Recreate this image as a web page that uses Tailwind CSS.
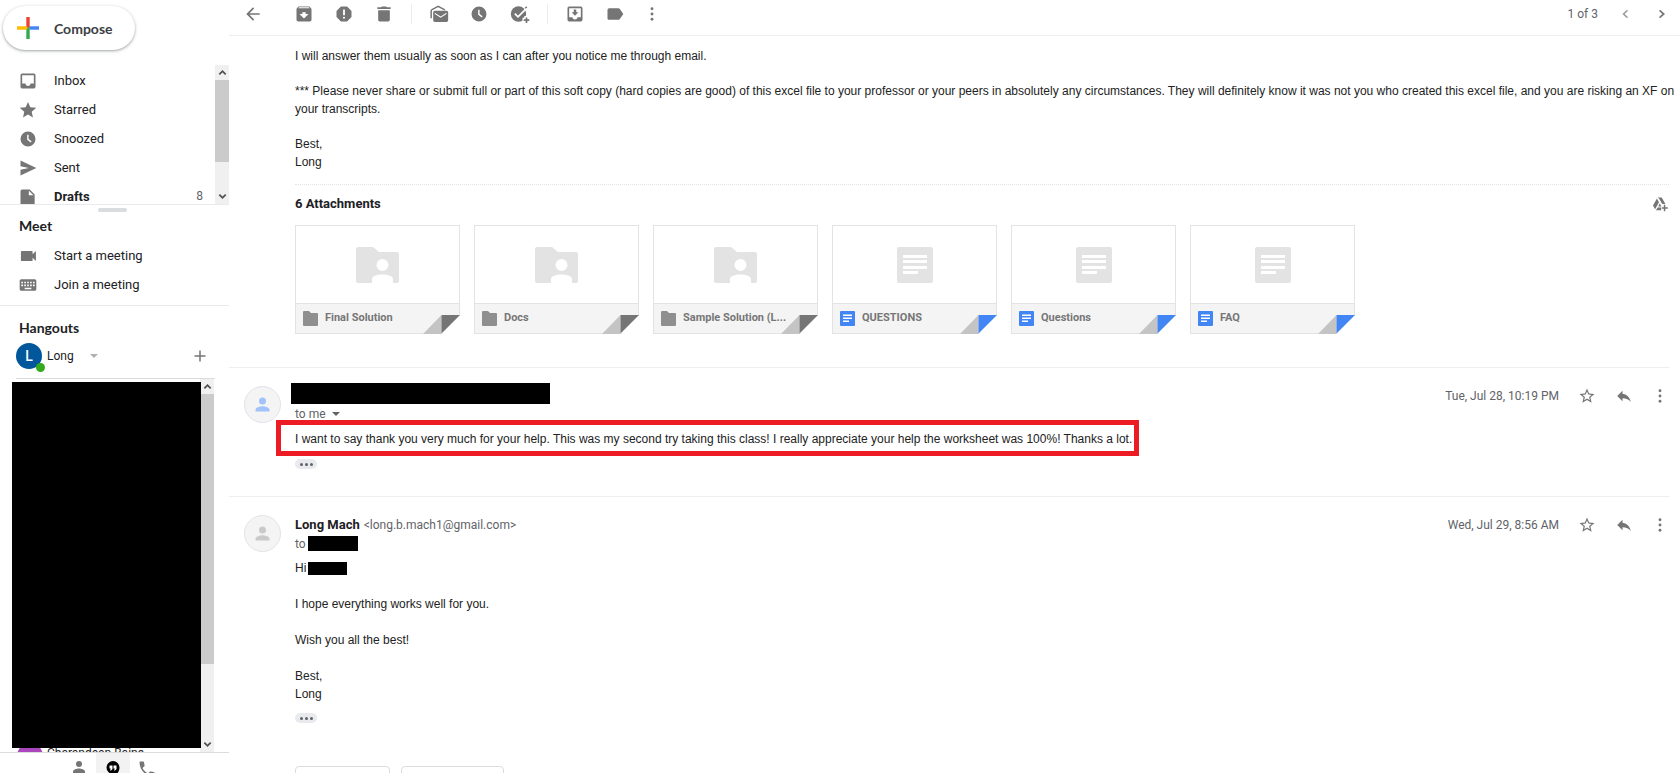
<!DOCTYPE html>
<html lang="en">
<head>
<meta charset="utf-8">
<title>Mail</title>
<script src="https://cdn.jsdelivr.net/npm/@tailwindcss/browser@4"></script>
</head>
<body class="bg-white font-['Roboto',sans-serif] text-[#202124]">
<svg class="hidden" aria-hidden="true">
  <symbol id="star-o" viewBox="0 0 24 24"><path d="M22 9.24l-7.19-.62L12 2 9.19 8.63 2 9.24l5.46 4.73L5.82 21 12 17.27 18.18 21l-1.63-7.03L22 9.24zM12 15.4l-3.76 2.27 1-4.28-3.32-2.88 4.38-.38L12 6.1l1.71 4.04 4.38.38-3.32 2.88 1 4.28L12 15.4z"/></symbol>
  <symbol id="reply" viewBox="0 0 24 24"><path d="M10 9V5l-7 7 7 7v-4.100c5 0 8.500 1.600 11 5.100-1-5-4-10-11-11z"/></symbol>
  <symbol id="dots" viewBox="0 0 24 24"><circle cx="12" cy="5" r="1.900"/><circle cx="12" cy="12" r="1.900"/><circle cx="12" cy="19" r="1.900"/></symbol>
  <symbol id="clock" viewBox="0 0 24 24"><path fill-rule="evenodd" d="M12 3a9 9 0 1 0 0 18 9 9 0 0 0 0-18zM11 7h1.700v5l3.600 2.700-1 1.400L11 13z"/></symbol>
  <symbol id="person" viewBox="0 0 24 24"><circle cx="12" cy="8" r="4"/><path d="M12 14c-2.670 0-8 1.340-8 4v2h16v-2c0-2.660-5.330-4-8-4z"/></symbol>
  <symbol id="folder-shared" viewBox="0 0 43 36"><path fill-rule="evenodd" d="M2 0h15l6 5h18a2 2 0 0 1 2 2v27a2 2 0 0 1-2 2h-4v-4c0-6-21-6-21 0v4H2a2 2 0 0 1-2-2V2a2 2 0 0 1 2-2zM26.500 12a6 6 0 1 0 0 12 6 6 0 0 0 0-12z"/></symbol>
  <symbol id="doc" viewBox="0 0 36 36"><path fill-rule="evenodd" d="M2 0h32a2 2 0 0 1 2 2v32a2 2 0 0 1-2 2H2a2 2 0 0 1-2-2V2a2 2 0 0 1 2-2zM6 8v3h24V8zM6 13v3h24v-3zM6 19v3h24v-3zM6 24v3h15v-3z"/></symbol>
  <symbol id="folder" viewBox="0 0 15 15"><path d="M1 0h5l2 2h6a1 1 0 0 1 1 1v11a1 1 0 0 1-1 1H1a1 1 0 0 1-1-1V1a1 1 0 0 1 1-1z"/></symbol>
  <symbol id="doc-sm" viewBox="0 0 15 15"><rect width="15" height="15" rx="1" fill="#4285f4"/><path fill="#fff" d="M3 3.500h9V5H3zM3 6.500h9V8H3zM3 9.500h6V11H3z"/></symbol>
  <symbol id="fold" viewBox="0 0 37 19"><path fill="#fff" d="M37 0v19H18.500z"/><path fill="#c4c4c4" d="M0 19L18.500 0v19z"/><path d="M18.500 0H37L18.500 18.500z"/></symbol>
  <symbol id="up" viewBox="0 0 10 10"><path fill="none" stroke="#505050" stroke-width="2" d="M1.500 7L5 3.500 8.500 7"/></symbol>
  <symbol id="down" viewBox="0 0 10 10"><path fill="none" stroke="#505050" stroke-width="2" d="M1.500 3L5 6.500 8.500 3"/></symbol>
</svg>

<div class="flex h-screen overflow-hidden">
  <aside class="flex w-[229px] shrink-0 flex-col">
    <div class="h-[65px] shrink-0 pt-1.5 pl-[3px]">
      <button class="flex h-11 w-[132px] items-center gap-3 rounded-full bg-white pl-[13px] font-['Lato',sans-serif] text-[14px] font-bold text-[#3c4043] shadow-[0_1px_2px_0_rgba(60,64,67,.302),0_1px_3px_1px_rgba(60,64,67,.149)]">
        <svg class="size-[24px]" viewBox="0 0 24 24"><path fill="#ea4335" d="M10.300 1h3.400v11h-3.400z"/><path fill="#fbbc04" d="M1 10.300h9.300L13.700 13.700H1z"/><path fill="#34a853" d="M10.300 13.700l3.400-3.400V23h-3.400z"/><path fill="#4285f4" d="M13.700 10.300H23v3.400h-9.300z"/></svg>
        <span class="pl-0.5">Compose</span>
      </button>
    </div>

    <div class="flex h-[139px] shrink-0 overflow-hidden">
      <nav class="flex-1 pt-px text-[13px] leading-[29px]">
        <a href="#" class="flex h-[29px] items-center pl-[18px]"><svg class="mr-4 size-5 fill-[#757575]" viewBox="0 0 24 24"><path d="M19 3H5a2 2 0 0 0-2 2v14c0 1.100.900 2 2 2h14a2 2 0 0 0 2-2V5a2 2 0 0 0-2-2zm0 12h-4c0 1.660-1.350 3-3 3s-3-1.340-3-3H5V5h14v10z"/></svg>Inbox</a>
        <a href="#" class="flex h-[29px] items-center pl-[18px]"><svg class="mr-4 size-5 fill-[#757575]" viewBox="0 0 24 24"><path d="M12 17.270L18 21l-1.600-7L22 9.240l-7.200-.610L12 2.500 9.200 8.630 2 9.240 7.500 14 6 21z"/></svg>Starred</a>
        <a href="#" class="flex h-[29px] items-center pl-[18px]"><svg class="mr-4 size-5 fill-[#757575]"><use href="#clock"/></svg>Snoozed</a>
        <a href="#" class="flex h-[29px] items-center pl-[18px]"><svg class="mr-4 size-5 fill-[#757575]" viewBox="0 0 24 24"><path d="M3 3v7l10 2-10 2v7l19-9z"/></svg>Sent</a>
        <a href="#" class="flex h-[29px] items-center pl-[18px] font-bold"><svg class="mr-4 size-5 fill-[#757575]" viewBox="0 0 24 24"><path fill-rule="evenodd" d="M5 3h9l6 6v12a1.500 1.500 0 0 1-1.500 1.500h-14A1.500 1.500 0 0 1 3 21V5a2 2 0 0 1 2-2zm8 1.500V10h5.500z"/></svg>Drafts<span class="mr-3 ml-auto text-[12px] font-normal text-[#5f6368]">8</span></a>
      </nav>
      <div class="flex w-3.5 flex-col items-center bg-[#f0f0f0]">
        <svg class="my-[3px] size-[9px]"><use href="#up"/></svg>
        <div class="h-[82px] w-full bg-[#cbcbcb]"></div>
        <svg class="mt-auto mb-[3px] size-[9px]"><use href="#down"/></svg>
      </div>
    </div>

    <section class="h-[102px] shrink-0 border-t border-b border-[#e8eaed]">
      <div class="mt-[3px] ml-[98px] h-1 w-[29px] rounded-full bg-[#dadce0]"></div>
      <h2 class="mt-1 pl-[19px] font-['Lato',sans-serif] text-[14px] leading-[20px] font-bold">Meet</h2>
      <div class="mt-[5px] text-[13px] leading-[29px]">
        <a href="#" class="flex h-[29px] items-center pl-[18px]"><svg class="mr-4 size-5 fill-[#757575]" viewBox="0 0 24 24"><path d="M17.500 10V7a1 1 0 0 0-1-1h-12a1 1 0 0 0-1 1v10a1 1 0 0 0 1 1h12a1 1 0 0 0 1-1v-3l4 4V6z"/></svg>Start a meeting</a>
        <a href="#" class="flex h-[29px] items-center pl-[18px]"><svg class="mr-4 size-5 fill-[#757575]" viewBox="0 0 24 24"><path fill-rule="evenodd" d="M4 5h16a2 2 0 0 1 2 2v10a2 2 0 0 1-2 2H4a2 2 0 0 1-2-2V7c0-1.100.900-2 2-2zm0 3v2h2V8zm0 3.500v2h2v-2zM7.500 8v2h2V8zm0 3.500v2h2v-2zM11 8v2h2V8zm0 3.500v2h2v-2zM14.500 8v2h2V8zm0 3.500v2h2v-2zM18 8v2h2V8zm0 3.500v2h2v-2zM8 15.200v2h8v-2z"/></svg>Join a meeting</a>
      </div>
    </section>

    <section class="flex min-h-0 flex-1 flex-col">
      <h2 class="mt-3 pl-[19px] font-['Lato',sans-serif] text-[14px] leading-[20px] font-bold">Hangouts</h2>
      <div class="mr-3.5 ml-4 flex h-[41px] shrink-0 items-center border-b border-[#dadce0] pb-1">
        <div class="relative grid size-[26px] place-items-center rounded-full bg-[#01579b] text-[14px] font-medium text-white">L<span class="absolute -right-[3px] -bottom-[3px] size-[9px] rounded-full bg-[#34a91c]"></span></div>
        <button class="ml-[5px] flex items-center text-[12px]">Long<svg class="ml-4 h-1 w-2 fill-[#b0b0b0]" viewBox="0 0 8 4"><path d="M0 0h8L4 4z"/></svg></button>
        <button class="mr-2 ml-auto" aria-label="New conversation"><svg class="size-3.5 stroke-[#757575]" viewBox="0 0 14 14"><path stroke-width="1.500" d="M7 1.500v11M1.500 7h11"/></svg></button>
      </div>
      <div class="relative mr-[15px] flex min-h-0 flex-1 overflow-hidden">
        <div class="flex flex-1 flex-col justify-end overflow-hidden pl-[17px]">
          <div class="-mb-[17px] flex items-start gap-1 text-[12px] leading-5"><span class="size-[26px] rounded-full bg-[#ab47bc]"></span>Charandeep Bains</div>
        </div>
        <div class="flex w-3.5 flex-col items-center bg-[#f0f0f0]">
          <svg class="my-[3px] size-[9px]"><use href="#up"/></svg>
          <div class="h-[270px] w-full bg-[#cbcbcb]"></div>
          <svg class="mt-auto mb-[3px] size-[9px]"><use href="#down"/></svg>
        </div>
        <div class="absolute top-[3px] right-[13px] bottom-1 left-3 bg-black"></div>
      </div>
    </section>

    <div class="flex h-[21px] shrink-0 justify-center border-t border-[#dadce0] pr-1 fill-[#757575]">
      <button class="flex h-8 w-[34px] items-start justify-center pt-[5px]" aria-label="Contacts"><svg class="size-[18px]"><use href="#person"/></svg></button>
      <button class="flex h-8 w-[34px] items-start justify-center bg-[#f2f2f2] pt-2" aria-label="Conversations"><svg class="h-4 w-3.5" viewBox="0 0 14 16"><path fill="#000" d="M7 0a6.500 6.500 0 0 0 0 13v3c3-1.500 6.500-5 6.500-9.500A6.500 6.500 0 0 0 7 0z"/><path fill="#fff" d="M3.500 4.500h3V8L5 9.500H4l.800-2H3.500zM7.500 4.500h3V8L9 9.500H8l.800-2H7.500z"/></svg></button>
      <button class="flex h-8 w-[34px] items-start justify-center pt-1.5" aria-label="Phone"><svg class="size-5" viewBox="0 0 24 24"><path d="M6.600 10.800c1.400 2.800 3.800 5.100 6.600 6.600l2.200-2.200c.300-.300.700-.400 1-.200 1.100.400 2.300.600 3.600.600.600 0 1 .400 1 1V20c0 .600-.400 1-1 1C10.600 21 3 13.400 3 4c0-.600.500-1 1-1h3.500c.600 0 1 .400 1 1 0 1.200.200 2.400.600 3.600.100.300 0 .700-.200 1z"/></svg></button>
    </div>
  </aside>

  <main class="flex min-w-0 flex-1 flex-col">
    <div class="flex h-9 shrink-0 items-center border-b border-[#eceff1] pb-2 fill-[#757575]">
      <button class="ml-1 w-10" aria-label="Back"><svg class="mx-auto size-[20px]" viewBox="0 0 24 24"><path d="M20 11H7.800l5.600-5.600L12 4l-8 8 8 8 1.400-1.400L7.800 13H20z"/></svg></button>
      <button class="ml-[11px] w-10" aria-label="Archive"><svg class="mx-auto size-5" viewBox="0 0 24 24"><path d="M20.500 5.200l-1.400-1.700c-.200-.300-.600-.500-1.100-.500H6c-.500 0-.900.200-1.200.600L3.500 5.200C3.200 5.600 3 6 3 6.500V19c0 1.100.900 2 2 2h14a2 2 0 0 0 2-2V6.500c0-.500-.200-.900-.500-1.300zM12 17.500L6.500 12H10v-2h4v2h3.500zM5.100 5l.800-1h12l1 1z"/></svg></button>
      <button class="w-10" aria-label="Report spam"><svg class="mx-auto size-5" viewBox="0 0 24 24"><path fill-rule="evenodd" d="M15.700 3H8.300L3 8.300v7.400L8.300 21h7.400l5.300-5.300V8.300zM10.900 6.500h2.200v7h-2.200zM12 15.200a1.300 1.300 0 1 1 0 2.600 1.300 1.300 0 0 1 0-2.600z"/></svg></button>
      <button class="w-10" aria-label="Delete"><svg class="mx-auto size-5" viewBox="0 0 24 24"><path d="M5 7.500V19c0 1.100.900 2 2 2h10a2 2 0 0 0 2-2V7.500zM15.500 4l-1-1h-5l-1 1H4v2h16V4z"/></svg></button>
      <div class="mx-[7px] h-5 w-px bg-[#ececec]"></div>
      <button class="w-10" aria-label="Mark as unread"><svg class="mx-auto size-5" viewBox="0 0 24 24"><path fill="none" stroke="#757575" stroke-width="1.800" d="M2.600 17V8.300c0-.800.300-1.300 1-1.600L11 2.800l8 4.200"/><path fill-rule="evenodd" d="M7 8h14a2 2 0 0 1 2 2v9.500a2 2 0 0 1-2 2H7a2 2 0 0 1-2-2V10c0-1.100.900-2 2-2zm0 2.500V12l7 4.500 7-4.500v-1.500l-7 4.500z"/></svg></button>
      <button class="w-10" aria-label="Snooze"><svg class="mx-auto size-5"><use href="#clock"/></svg></button>
      <button class="ml-px w-10" aria-label="Add to tasks"><svg class="mx-auto size-6" viewBox="0 0 24 24"><circle cx="10.500" cy="12" r="7.700"/><path fill="none" stroke="#fff" stroke-width="1.700" d="M6.800 11.700l3.200 3.200 9-9"/><path fill="none" stroke="#757575" stroke-width="1.500" d="M17.300 6.200l1.500-1.500"/><path fill="none" stroke="#fff" stroke-width="4.500" d="M18.500 14v8M14.500 18h8"/><path fill="none" stroke="#757575" stroke-width="1.700" d="M18.500 15.500v5.500M15.700 18.200h5.600"/></svg></button>
      <div class="mx-[7px] h-5 w-px bg-[#ececec]"></div>
      <button class="w-10" aria-label="Move to"><svg class="mx-auto size-5" viewBox="0 0 24 24"><path fill-rule="evenodd" d="M5 3h14a2 2 0 0 1 2 2v14a2 2 0 0 1-2 2H5a2 2 0 0 1-2-2V5c0-1.100.900-2 2-2zm0 2v11h4c0 3.500 6 3.500 6 0h4V5zm5.500 1.500h3V10H16l-4 4-4-4h2.500z"/></svg></button>
      <button class="w-10" aria-label="Labels"><svg class="mx-auto size-5" viewBox="0 0 24 24"><path d="M17.600 5.800c-.400-.500-1-.800-1.600-.800H5a2 2 0 0 0-2 2v10c0 1.100.900 2 2 2h11c.700 0 1.300-.300 1.600-.800L22 12z"/></svg></button>
      <button class="w-[34px]" aria-label="More"><svg class="mx-auto size-[18px]"><use href="#dots"/></svg></button>
      <span class="ml-auto text-[12px] text-[#5f6368]">1 of 3</span>
      <button class="ml-2 w-[37px]" aria-label="Newer"><svg class="mx-auto size-4 fill-[#9e9e9e]" viewBox="0 0 24 24"><path d="M16.500 7.400L15 5.500 8 12l7 6.500 1.500-1.900L11.500 12z"/></svg></button>
      <button class="w-[37px]" aria-label="Older"><svg class="mx-auto size-4" viewBox="0 0 24 24"><path d="M7.500 7.400L9 5.500l7.500 6.500L9 18.500l-1.500-1.900 5-4.600z"/></svg></button>
    </div>

    <div class="min-h-0 flex-1 overflow-hidden pr-[11px]">
      <article class="h-[331px] pt-[11px] pl-[66px]">
        <div class="-mr-2 flex flex-col gap-[17px] font-['Liberation_Sans',sans-serif] text-[12px] leading-[18px] text-[#222]">
          <p>I will answer them usually as soon as I can after you notice me through email.</p>
          <p>*** Please never share or submit full or part of this soft copy (hard copies are good) of this excel file to your professor or your peers in absolutely any circumstances. They will definitely know it was not you who created this excel file, and you are risking an XF on your transcripts.</p>
          <p>Best,<br>Long</p>
        </div>
        <div class="mt-[13px] flex h-[41px] items-center justify-between border-t border-dotted border-[#e4e4e4] pb-0.5">
          <h3 class="text-[13px] font-bold">6 Attachments</h3>
          <button class="mr-px" aria-label="Add all to Drive"><svg class="size-4 fill-[#757575]" viewBox="0 0 16 16"><path d="M5.500 1.500h4.200l3.700 6.600h-3.200L7 2.600zM4.900 2.500l2.100 3.700-3.900 7L1 9.600zM7.800 7.600l1.700 3H6.200zM5.600 11.400h3.600v2.800H4z"/><path d="M11.800 8.800h1.500v2.500h2.500v1.500h-2.500v2.500h-1.500v-2.500H9.900v-1.500h1.900z"/></svg></button>
        </div>
        <div class="flex gap-3.5 text-[11px] font-bold text-[#777]">
          <a href="#" class="relative flex h-[109px] w-[165px] flex-col border border-[#e3e3e3]"><span class="grid flex-1 place-items-center"><svg class="h-9 w-[43px] fill-[#e3e3e3]"><use href="#folder-shared"/></svg></span><span class="flex h-[30px] items-center gap-[7px] border-t border-[#e3e3e3] bg-[#f4f4f4] px-[7px]"><svg class="size-[15px] fill-[#8f8f8f]"><use href="#folder"/></svg>Final Solution</span><svg class="absolute -right-px -bottom-px h-[19px] w-[37px] fill-[#757575]"><use href="#fold"/></svg></a>
          <a href="#" class="relative flex h-[109px] w-[165px] flex-col border border-[#e3e3e3]"><span class="grid flex-1 place-items-center"><svg class="h-9 w-[43px] fill-[#e3e3e3]"><use href="#folder-shared"/></svg></span><span class="flex h-[30px] items-center gap-[7px] border-t border-[#e3e3e3] bg-[#f4f4f4] px-[7px]"><svg class="size-[15px] fill-[#8f8f8f]"><use href="#folder"/></svg>Docs</span><svg class="absolute -right-px -bottom-px h-[19px] w-[37px] fill-[#757575]"><use href="#fold"/></svg></a>
          <a href="#" class="relative flex h-[109px] w-[165px] flex-col border border-[#e3e3e3]"><span class="grid flex-1 place-items-center"><svg class="h-9 w-[43px] fill-[#e3e3e3]"><use href="#folder-shared"/></svg></span><span class="flex h-[30px] items-center gap-[7px] border-t border-[#e3e3e3] bg-[#f4f4f4] px-[7px]"><svg class="size-[15px] fill-[#8f8f8f]"><use href="#folder"/></svg>Sample Solution (L...</span><svg class="absolute -right-px -bottom-px h-[19px] w-[37px] fill-[#757575]"><use href="#fold"/></svg></a>
          <a href="#" class="relative flex h-[109px] w-[165px] flex-col border border-[#e3e3e3]"><span class="grid flex-1 place-items-center"><svg class="size-9 fill-[#e3e3e3]"><use href="#doc"/></svg></span><span class="flex h-[30px] items-center gap-[7px] border-t border-[#e3e3e3] bg-[#f4f4f4] px-[7px]"><svg class="size-[15px]"><use href="#doc-sm"/></svg>QUESTIONS</span><svg class="absolute -right-px -bottom-px h-[19px] w-[37px] fill-[#4285f4]"><use href="#fold"/></svg></a>
          <a href="#" class="relative flex h-[109px] w-[165px] flex-col border border-[#e3e3e3]"><span class="grid flex-1 place-items-center"><svg class="size-9 fill-[#e3e3e3]"><use href="#doc"/></svg></span><span class="flex h-[30px] items-center gap-[7px] border-t border-[#e3e3e3] bg-[#f4f4f4] px-[7px]"><svg class="size-[15px]"><use href="#doc-sm"/></svg>Questions</span><svg class="absolute -right-px -bottom-px h-[19px] w-[37px] fill-[#4285f4]"><use href="#fold"/></svg></a>
          <a href="#" class="relative flex h-[109px] w-[165px] flex-col border border-[#e3e3e3]"><span class="grid flex-1 place-items-center"><svg class="size-9 fill-[#e3e3e3]"><use href="#doc"/></svg></span><span class="flex h-[30px] items-center gap-[7px] border-t border-[#e3e3e3] bg-[#f4f4f4] px-[7px]"><svg class="size-[15px]"><use href="#doc-sm"/></svg>FAQ</span><svg class="absolute -right-px -bottom-px h-[19px] w-[37px] fill-[#4285f4]"><use href="#fold"/></svg></a>
        </div>
      </article>

      <article class="flex h-[129px] border-t border-[#eceff1] pl-[15px]">
        <div class="mt-[18px] mr-3.5 grid size-[37px] shrink-0 place-items-center rounded-full border border-[#dfe3ec] bg-[#f4f4f4]"><svg class="size-[21px] fill-[#a1c2fa]"><use href="#person"/></svg></div>
        <div class="min-w-0 flex-1 pt-[15px]">
          <div class="-mr-[9px] flex h-[21px] items-center">
            <div class="-ml-1 h-[21px] w-[259px] bg-black"></div>
            <time class="ml-auto pt-1 text-[12px] text-[#5f6368]">Tue, Jul 28, 10:19 PM</time>
            <div class="flex pt-1 pl-[9px] fill-[#757575]">
              <button class="w-[37px]" aria-label="Star"><svg class="mx-auto size-[18px]"><use href="#star-o"/></svg></button>
              <button class="w-[37px]" aria-label="Reply"><svg class="mx-auto size-[18px]"><use href="#reply"/></svg></button>
              <button class="w-9" aria-label="More"><svg class="mx-auto size-[18px]"><use href="#dots"/></svg></button>
            </div>
          </div>
          <button class="flex h-5 items-center gap-1.5 text-[12px] text-[#5f6368]">to me<svg class="h-1 w-2 fill-[#5f6368]" viewBox="0 0 8 4"><path d="M0 0h8L4 4z"/></svg></button>
          <p class="relative mt-1.5 w-fit font-['Liberation_Sans',sans-serif] text-[12px] leading-[18px] text-[#222]">I want to say thank you very much for your help. This was my second try taking this class! I really appreciate your help the worksheet was 100%! Thanks a lot.<span class="absolute -top-[10px] -right-[7px] -bottom-[8px] -left-[19px] border-[5px] border-[#ed1c24]"></span></p>
          <button class="mt-[11px] flex h-2.5 w-[22px] items-center justify-center gap-0.5 rounded-full bg-[#e8eaed]" aria-label="Show trimmed content"><span class="size-[3px] rounded-full bg-[#5f6368]"></span><span class="size-[3px] rounded-full bg-[#5f6368]"></span><span class="size-[3px] rounded-full bg-[#5f6368]"></span></button>
        </div>
      </article>

      <article class="flex border-t border-[#eceff1] pl-[15px]">
        <div class="mt-[18px] mr-3.5 grid size-[37px] shrink-0 place-items-center rounded-full border border-[#e4e4e4] bg-[#f4f4f4]"><svg class="size-[21px] fill-[#cacaca]"><use href="#person"/></svg></div>
        <div class="min-w-0 flex-1 pt-[17px]">
          <div class="-mr-[9px] flex h-[21px] items-center">
            <h3 class="text-[13px] font-bold">Long Mach</h3>
            <span class="ml-1 text-[12px] text-[#5f6368]">&lt;long.b.mach1@gmail.com&gt;</span>
            <time class="ml-auto text-[12px] text-[#5f6368]">Wed, Jul 29, 8:56 AM</time>
            <div class="flex pl-[9px] fill-[#757575]">
              <button class="w-[37px]" aria-label="Star"><svg class="mx-auto size-[18px]"><use href="#star-o"/></svg></button>
              <button class="w-[37px]" aria-label="Reply"><svg class="mx-auto size-[18px]"><use href="#reply"/></svg></button>
              <button class="w-9" aria-label="More"><svg class="mx-auto size-[18px]"><use href="#dots"/></svg></button>
            </div>
          </div>
          <div class="flex h-[17px] items-center text-[12px] text-[#5f6368]"><span class="w-[13px]">to</span><span class="h-[15px] w-[50px] bg-black"></span></div>
          <div class="mt-[7px] flex flex-col gap-[18px] font-['Liberation_Sans',sans-serif] text-[12px] leading-[18px] text-[#222]">
            <p class="flex items-center"><span class="w-[13px]">Hi</span><span class="h-[13px] w-[39px] bg-black"></span></p>
            <p>I hope everything works well for you.</p>
            <p>Wish you all the best!</p>
            <p>Best,<br>Long</p>
          </div>
          <button class="mt-2.5 flex h-2.5 w-[22px] items-center justify-center gap-0.5 rounded-full bg-[#e8eaed]" aria-label="Show trimmed content"><span class="size-[3px] rounded-full bg-[#5f6368]"></span><span class="size-[3px] rounded-full bg-[#5f6368]"></span><span class="size-[3px] rounded-full bg-[#5f6368]"></span></button>
          <div class="mt-[43px] flex gap-[11px]">
            <button class="h-9 w-[95px] rounded border border-[#dadce0]" aria-label="Reply"></button>
            <button class="h-9 w-[103px] rounded border border-[#dadce0]" aria-label="Forward"></button>
          </div>
        </div>
      </article>
    </div>
  </main>
</div>
</body>
</html>
